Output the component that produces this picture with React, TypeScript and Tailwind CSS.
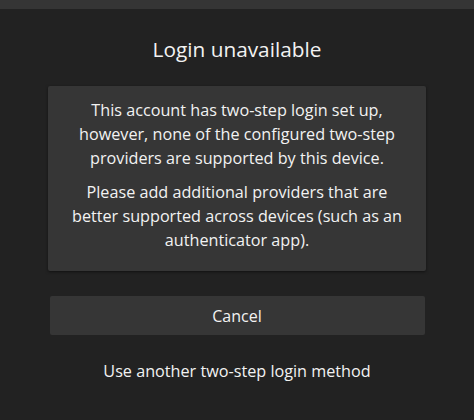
export default function App() {
  return (
    <div
      className="w-[474px] h-[420px] bg-[#222222] text-white flex flex-col overflow-hidden"
      style={{ fontFamily: '"Open Sans", sans-serif' }}
    >
      <div className="h-[9px] bg-[#353535] shrink-0" />
      <div className="px-[48px] flex flex-col items-center">
        <h1 className="mt-[26px] text-[20.8px] leading-[28px] text-[#f2f2f2]">Login unavailable</h1>
        <div className="mt-[23px] w-full bg-[#363636] rounded-[2px] shadow-[0_1px_3px_rgba(0,0,0,0.5)] pt-[12px] pb-[19px] px-[20px] text-center text-[16.2px] leading-[24px] text-[#f2f2f2]">
          <p className="mb-[10px]">
            This account has two-step login set up, however, none of the configured two-step providers are supported by this device.
          </p>
          <p>
            Please add additional providers that are better supported across devices (such as an authenticator app).
          </p>
        </div>
        <button className="mt-[25px] w-[375px] h-[39px] bg-[#363636] rounded-[2px] text-[16px] text-[#f2f2f2]">
          Cancel
        </button>
        <div className="mt-[24px] text-[16.2px] leading-[24px] text-[#f2f2f2]">Use another two-step login method</div>
      </div>
    </div>
  );
}
